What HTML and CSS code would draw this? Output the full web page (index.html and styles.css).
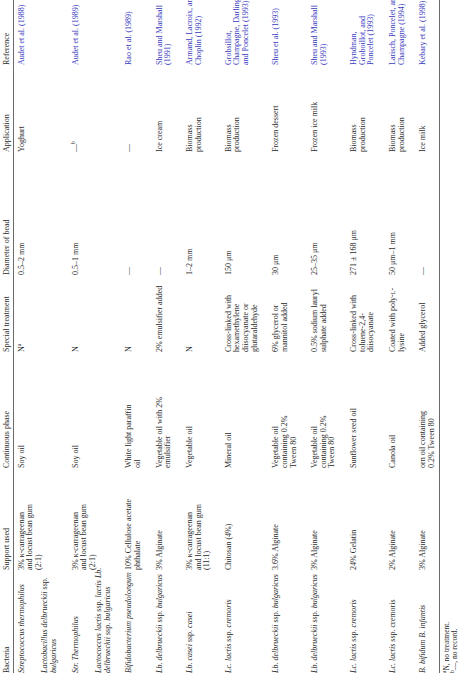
FILE: index.html
```html
<!DOCTYPE html>
<html>
<head>
<meta charset="utf-8">
<link rel="stylesheet" href="styles.css">
</head>
<body>
<div class="sheet">
<table class="tbl">
<colgroup>
<col class="c-bac"><col class="c-sup"><col class="c-con"><col class="c-spe"><col class="c-dia"><col class="c-app"><col class="c-ref">
</colgroup>
<thead>
<tr><th>Bacteria</th><th>Support used</th><th>Continuous phase</th><th>Special treatment</th><th>Diameter of bead</th><th>Application</th><th>Reference</th></tr>
</thead>
<tbody>
<tr class="first">
<td><p class="bac"><i>Streptococcus thermophilus</i></p><p class="bac sub"><i>Lactobacillus delbrueckii</i> ssp.<br><i>bulgaricus</i></p></td>
<td>3% κ-carrageenan<br>and locust bean gum<br>(2:1)</td>
<td>Soy oil</td>
<td>N<sup>a</sup></td>
<td>0.5–2 mm</td>
<td>Yoghurt</td>
<td class="ref">Audet et al. (1988)</td>
</tr>
<tr>
<td><p class="bac"><i>Str. Thermophilus</i></p><p class="bac sub"><i>Lactococcus lactis</i> ssp. <i>lactis Lb.</i><br><i>delbrueckii</i> ssp. <i>bulgaricus</i></p></td>
<td>3% κ-carrageenan<br>and locust bean gum<br>(2:1)</td>
<td>Soy oil</td>
<td>N</td>
<td>0.5–1 mm</td>
<td>—<sup>b</sup></td>
<td class="ref">Audet et al. (1989)</td>
</tr>
<tr>
<td><i>Bifidobacterium pseudolongum</i></td>
<td>10% Cellulose acetate<br>phthalate</td>
<td>White light paraffin<br>oil</td>
<td>N</td>
<td>—</td>
<td>—</td>
<td class="ref">Rao et al. (1989)</td>
</tr>
<tr>
<td><i>Lb. delbrueckii</i> ssp. <i>bulgaricus</i></td>
<td>3% Alginate</td>
<td>Vegetable oil with 2%<br>emulsifier</td>
<td>2% emulsifier added</td>
<td>—</td>
<td>Ice cream</td>
<td class="ref">Sheu and Marshall<br>(1991)</td>
</tr>
<tr>
<td><i>Lb. casei</i> ssp. <i>casei</i></td>
<td>3% κ-carrageenan<br>and locust bean gum<br>(11:1)</td>
<td>Vegetable oil</td>
<td>N</td>
<td>1–2 mm</td>
<td>Biomass<br>production</td>
<td class="ref">Armand, Lacroix, and<br>Choplin (1992)</td>
</tr>
<tr>
<td><i>Lc. lactis</i> ssp. <i>cremoris</i></td>
<td>Chitosan (4%)</td>
<td>Mineral oil</td>
<td>Cross-linked with<br>hexamethylene<br>diisocyanate or<br>glutaraldehyde</td>
<td>150 μm</td>
<td>Biomass<br>production</td>
<td class="ref">Grobsillot,<br>Champagne, Darling,<br>and Poncelet (1993)</td>
</tr>
<tr>
<td><i>Lb. delbrueckii</i> ssp. <i>bulgaricus</i></td>
<td>3.6% Alginate</td>
<td>Vegetable oil<br>containing 0.2%<br>Tween 80</td>
<td>6% glycerol or<br>mannitol added</td>
<td>30 μm</td>
<td>Frozen dessert</td>
<td class="ref">Sheu et al. (1993)</td>
</tr>
<tr>
<td><i>Lb. delbrueckii</i> ssp. <i>bulgaricus</i></td>
<td>3% Alginate</td>
<td>Vegetable oil<br>containing 0.2%<br>Tween 80</td>
<td>0.5% sodium lauryl<br>sulphate added</td>
<td>25–35 μm</td>
<td>Frozen ice milk</td>
<td class="ref">Sheu and Marshall<br>(1993)</td>
</tr>
<tr>
<td><i>Lc. lactis</i> ssp. <i>cremoris</i></td>
<td>24% Gelatin</td>
<td>Sunflower seed oil</td>
<td>Cross-linked with<br>toluene-2,4-<br>diisocyanate</td>
<td>271 ± 168 μm</td>
<td>Biomass<br>production</td>
<td class="ref">Hyndman,<br>Groboillot, and<br>Poncelet (1993)</td>
</tr>
<tr>
<td><i>Lc. lactis</i> ssp. cremoris</td>
<td>2% Alginate</td>
<td>Canola oil</td>
<td>Coated with poly-<span class="sc">l</span>-<br>lysine</td>
<td>50 μm–1 mm</td>
<td>Biomass<br>production</td>
<td class="ref">Larisch, Poncelet, and<br>Champagne (1994)</td>
</tr>
<tr class="last">
<td><i>B. bifidum B. infantis</i></td>
<td>3% Alginate</td>
<td>orn oil containing<br>0.2% Tween 80</td>
<td>Added glycerol</td>
<td>—</td>
<td>Ice milk</td>
<td class="ref">Kebary et al. (1998)</td>
</tr>
</tbody>
</table>
<div class="notes">
<p><sup>a</sup>N, no treatment.</p>
<p><sup>b</sup>—, no record.</p>
</div>
</div>
</body>
</html>
```
FILE: styles.css
```css
html, body {
  margin: 0;
  padding: 0;
  width: 474px;
  height: 673px;
  overflow: hidden;
  background: #ffffff;
}

.sheet {
  width: 720px;
  height: 474px;
  transform-origin: 0 0;
  transform: translateY(673px) rotate(-90deg);
  font-family: "Liberation Serif", "Times New Roman", serif;
  font-size: 8px;
  line-height: 8.6px;
  color: #2b2b2b;
}

.tbl {
  border-collapse: collapse;
  table-layout: fixed;
  width: 720px;
}

.c-bac { width: 103px; }
.c-sup { width: 102px; }
.c-con { width: 116px; }
.c-spe { width: 77px; }
.c-dia { width: 123px; }
.c-app { width: 87px; }
.c-ref { width: 112px; }

.tbl th {
  font-weight: normal;
  text-align: left;
  padding: 2.5px 0 2px 0;
  border-bottom: 1px solid #6a6a6a;
  white-space: nowrap;
}

.tbl td {
  vertical-align: top;
  text-align: left;
  padding: 13.1px 0 0 0;
  white-space: nowrap;
}

.tbl tr.first td {
  padding-top: 3.6px;
}

.tbl tr.last td {
  padding-bottom: 3px;
  border-bottom: 1px solid #6a6a6a;
}

.bac {
  margin: 0;
}

.bac.sub {
  margin-top: 15px;
}

.ref {
  color: #3a3ac0;
}

sup {
  font-size: 5.5px;
  line-height: 0;
  vertical-align: 3px;
}

.sc {
  font-variant: small-caps;
}

.notes {
  padding-top: 3px;
  font-size: 7.5px;
  line-height: 8px;
}

.notes p {
  margin: 0;
}
```
